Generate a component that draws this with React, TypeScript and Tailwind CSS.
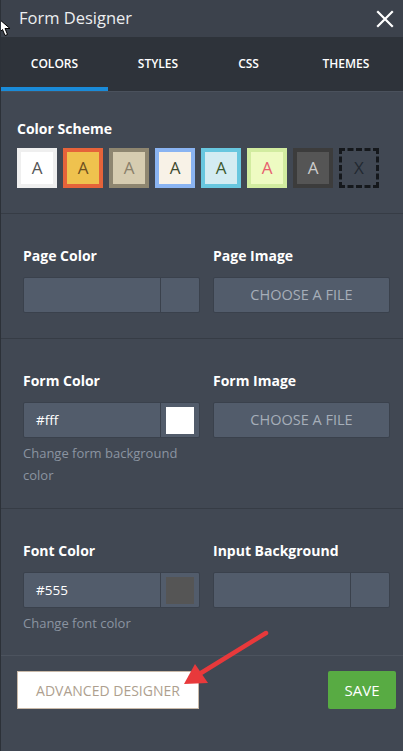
import React from "react";

const swatches = [
  { border: "border-[#efefef]", inner: "bg-[#ffffff]", text: "text-[#555555]" },
  { border: "border-[#e5633a]", inner: "bg-[#efc24e]", text: "text-[#6e5020]" },
  { border: "border-[#8e8670]", inner: "bg-[#d6ccb0]", text: "text-[#8a806a]" },
  { border: "border-[#8ab4f2]", inner: "bg-[#f8f2e7]", text: "text-[#3e4a2e]" },
  { border: "border-[#68c7df]", inner: "bg-[#d3ecf2]", text: "text-[#3d5a2c]" },
  { border: "border-[#d2eca0]", inner: "bg-[#eefbc2]", text: "text-[#e8606e]" },
  { border: "border-[#3c3c3c]", inner: "bg-[#555555]", text: "text-[#cccccc]" },
];

function Label({ children }: { children: React.ReactNode }) {
  return <div className="text-[14px] leading-[20px] font-bold text-white">{children}</div>;
}

function ColorInput({ value, swatch }: { value?: string; swatch?: string }) {
  return (
    <div className="flex h-[36px] w-[177px] rounded-[2px] border border-[#3a414c] bg-[#525c6b]">
      <div className="flex flex-1 items-center pl-[12px] text-[13.5px] text-white">{value}</div>
      <div className="flex w-[39px] items-center justify-center border-l border-[#3a414c]">
        {swatch && <div className={`h-[27px] w-[28px] ${swatch}`} />}
      </div>
    </div>
  );
}

function FileButton() {
  return (
    <div className="flex h-[36px] w-[177px] items-center justify-center rounded-[2px] border border-[#3a414c] bg-[#525c6b] text-[14.5px] text-[#a6aeb9]">
      CHOOSE A FILE
    </div>
  );
}

export default function App() {
  return (
    <div className="relative h-[751px] w-[403px] overflow-hidden border-l border-[#2c3138] bg-[#414853] font-['Open_Sans',sans-serif]">
      {/* header */}
      <div className="flex h-[37px] items-center justify-between bg-[#3c424c] pl-[18px] pr-[9px]">
        <span className="text-[16.5px] text-[#eceef0]">Form Designer</span>
        <svg width="18" height="18" viewBox="0 0 18 18" className="text-white">
          <path d="M2 2 L16 16 M16 2 L2 16" stroke="currentColor" strokeWidth="2.2" strokeLinecap="square" />
        </svg>
      </div>

      {/* tabs */}
      <div className="flex h-[55px] border-b border-[#4a515c] bg-[#2e333a] text-[12px] font-semibold text-white">
        <div className="relative flex w-[111px] items-center justify-center">
          COLORS
          <div className="absolute bottom-0 left-0 h-[4px] w-full bg-[#1a8bd8]" />
        </div>
        <div className="flex w-[104px] items-center justify-center">STYLES</div>
        <div className="flex w-[84px] items-center justify-center">CSS</div>
        <div className="flex w-[114px] shrink-0 items-center justify-center">THEMES</div>
      </div>

      {/* color scheme */}
      <div className="h-[121px] px-[16px] pt-[27px]">
        <Label>Color Scheme</Label>
        <div className="mt-[9px] flex gap-[6px]">
          {swatches.map((s, i) => (
            <div key={i} className={`flex h-[40px] w-[40px] border-[4px] ${s.border} ${s.inner}`}>
              <span className={`flex flex-1 items-center justify-center text-[17px] ${s.text}`}>A</span>
            </div>
          ))}
          <div className="flex h-[40px] w-[40px] items-center justify-center border-[3px] border-dashed border-[#15181c] text-[17px] text-[#222831]">
            X
          </div>
        </div>
      </div>

      {/* page */}
      <div className="h-[125px] border-t border-[#363c45] px-[22px] pt-[32px]">
        <div className="flex gap-[13px]">
          <div className="w-[177px]">
            <Label>Page Color</Label>
            <div className="mt-[11px]">
              <ColorInput />
            </div>
          </div>
          <div className="w-[177px]">
            <Label>Page Image</Label>
            <div className="mt-[11px]">
              <FileButton />
            </div>
          </div>
        </div>
      </div>

      {/* form */}
      <div className="h-[170px] border-t border-[#363c45] px-[22px] pt-[32px]">
        <div className="flex gap-[13px]">
          <div className="w-[177px]">
            <Label>Form Color</Label>
            <div className="mt-[11px]">
              <ColorInput value="#fff" swatch="bg-white" />
            </div>
            <div className="mt-[4px] text-[13px] leading-[22px] text-[#8b94a1]">Change form background color</div>
          </div>
          <div className="w-[177px]">
            <Label>Form Image</Label>
            <div className="mt-[11px]">
              <FileButton />
            </div>
          </div>
        </div>
      </div>

      {/* font */}
      <div className="h-[147px] border-t border-[#363c45] px-[22px] pt-[32px]">
        <div className="flex gap-[13px]">
          <div className="w-[177px]">
            <Label>Font Color</Label>
            <div className="mt-[11px]">
              <ColorInput value="#555" swatch="bg-[#555555]" />
            </div>
            <div className="mt-[4px] text-[13px] leading-[22px] text-[#8b94a1]">Change font color</div>
          </div>
          <div className="w-[177px]">
            <Label>Input Background</Label>
            <div className="mt-[11px]">
              <ColorInput />
            </div>
          </div>
        </div>
      </div>

      {/* footer */}
      <div className="flex items-start justify-between border-t border-[#4c535e] pl-[16px] pr-[7px] pt-[15px]">
        <div className="flex h-[38px] w-[182px] items-center justify-center border border-[#c9b9a8] bg-white text-[14px] text-[#ae9f8f]">
          ADVANCED DESIGNER
        </div>
        <div className="flex h-[38px] w-[68px] items-center justify-center rounded-[2px] bg-[#58ab43] text-[15px] text-white">
          SAVE
        </div>
      </div>

      {/* annotation arrow */}
      <svg className="absolute left-0 top-0" width="403" height="751" viewBox="0 0 403 751">
        <line x1="265" y1="633" x2="200" y2="673" stroke="#e8393b" strokeWidth="4.5" strokeLinecap="round" />
        <polygon points="183,684 194,664 207,683" fill="#e8393b" />
      </svg>

      {/* mouse cursor */}
      <svg className="absolute left-[-3px] top-[18px]" width="14" height="20" viewBox="0 0 14 20">
        <path d="M1 1 L1 15 L4.5 11.5 L7 17.5 L9.5 16.5 L7 10.5 L12 10.5 Z" fill="white" stroke="black" strokeWidth="1" />
      </svg>
    </div>
  );
}
